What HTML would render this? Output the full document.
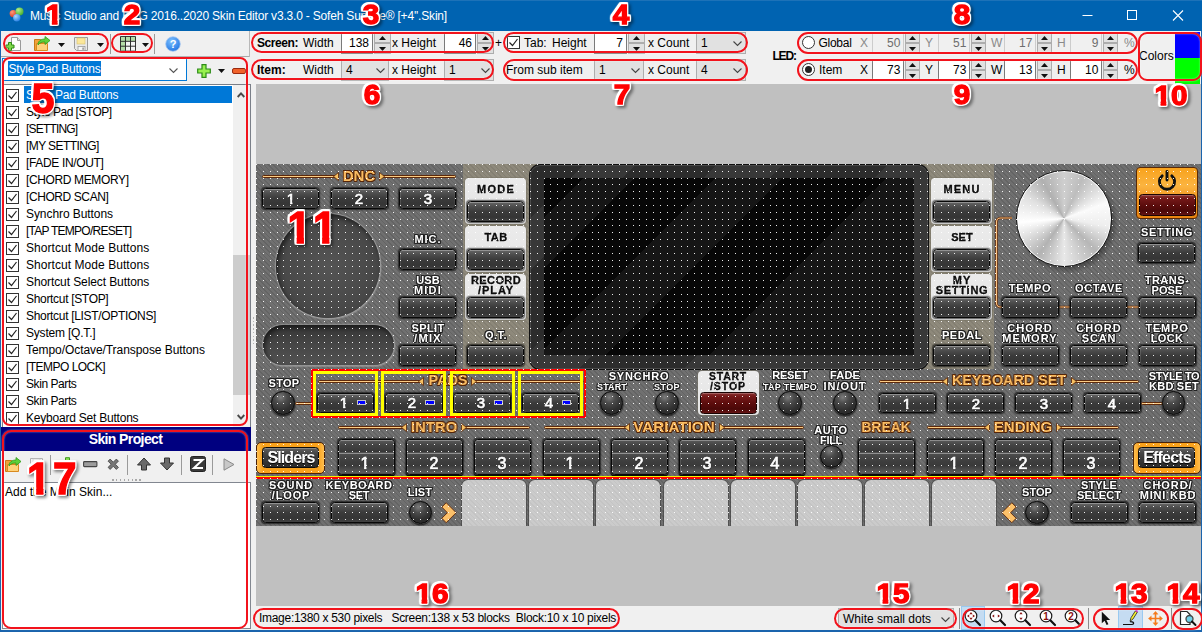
<!DOCTYPE html><html><head><meta charset="utf-8"><title>Skin Editor</title><style>
html,body{margin:0;padding:0;}
body{width:1202px;height:632px;position:relative;overflow:hidden;background:#f0f0f0;font-family:"Liberation Sans","DejaVu Sans",sans-serif;font-size:12px;color:#000;}
div{position:absolute;box-sizing:border-box;}
span.c1{box-sizing:border-box;}
svg{position:absolute;overflow:visible;}
.kl,.kd,.kn,.ko{will-change:transform;}
.t{white-space:nowrap;line-height:14px;height:14px;}
.b{font-weight:bold;}
.edit{background:#fff;border:1px solid #7a7a7a;}
.edit.dis{background:#f0f0f0;border-color:#ccc;color:#6d6d6d;}
.edit .v{right:3px;top:3px;line-height:14px;white-space:nowrap;}
.combo{background:#e1e1e1;border:1px solid #adadad;}
.combo .v{left:4px;top:3px;line-height:14px;white-space:nowrap;}
.sp{background:#e1e1e1;border:1px solid #adadad;}
.kb{border:1.300px solid #080808;border-radius:3.500px;background:linear-gradient(#727272 0,#5e5e5e 8%,#4c4c4c 25%,#3b3b3b 50%,#353535 80%,#424242 100%);box-shadow:0 0 1.500px .5px rgba(0,0,0,.65),inset 0 1px 0 rgba(255,255,255,.25),inset 1px 0 0 rgba(255,255,255,.12),inset -1px 0 0 rgba(255,255,255,.06);}
.kbt{border:1.300px solid #080808;border-radius:3.500px;background:linear-gradient(#6e6e6e 0,#555 4%,#444 15%,#383838 34%,#343434 36.5%,#9c9c9c 37.5%,#9c9c9c 39.5%,#4c4c4c 41%,#3e3e3e 62%,#3a3a3a 75%,#5a5a5a 96%,#444 100%);box-shadow:0 0 1.500px .5px rgba(0,0,0,.65),0 1.500px 0 rgba(0,0,0,.8),inset 0 1px 0 rgba(255,255,255,.25),inset 1px 0 0 rgba(255,255,255,.12),inset -1px 0 0 rgba(255,255,255,.06);}
.rb{border:1.800px solid #050505;border-radius:50%;background:radial-gradient(circle at 40% 24%,#7c7c7c 0%,#4c4c4c 28%,#303030 62%,#222 100%);box-shadow:0 1px 1.500px .5px rgba(0,0,0,.65);}
.kl{color:#fff;font-weight:bold;font-size:11px;line-height:10px;white-space:nowrap;text-align:center;transform:translateX(-50%);letter-spacing:0.2px;text-shadow:-1px 0 #222,1px 0 #222,0 -1px #222,0 1px #222,-1px -1px #222,1px 1px #222,1px -1px #222,-1px 1px #222;}
.kd{color:#0c0c0c;font-weight:bold;font-size:11px;line-height:10px;white-space:nowrap;text-align:center;transform:translateX(-50%);-webkit-text-stroke:.3px #0c0c0c;}
.kn{--s:.7px;color:#fff;font-weight:normal;-webkit-text-stroke:var(--s) #fff;font-size:15px;line-height:15px;white-space:nowrap;text-align:center;transform:translateX(-50%);text-shadow:0 1px 1px #000;}
.ko{color:#fbbd62;font-weight:bold;white-space:nowrap;text-align:center;transform-origin:50% 50%;text-shadow:-1px 0 #55260a,1px 0 #55260a,0 -1px #55260a,0 1px #55260a,-.7px -.7px #55260a,.7px .7px #55260a,.7px -.7px #55260a,-.7px .7px #55260a;}
.tile{background:linear-gradient(#ebebeb,#e4e4e4);border-radius:4px;box-shadow:0 0 0 1px rgba(120,115,100,.5);}
.ro{border:2.300px solid #f2131c;box-shadow:0 0 1.5px rgba(255,255,255,.8), inset 0 0 1.5px rgba(255,255,255,.8);}
.num{color:#f00;font-weight:bold;white-space:nowrap;transform:translateX(-50%) scaleX(1.06);--s:1.300px;-webkit-text-stroke:var(--s) #f00;filter:drop-shadow(1.400px 0 0 #fff) drop-shadow(-1.400px 0 0 #fff) drop-shadow(0 1.400px 0 #fff) drop-shadow(0 -1.400px 0 #fff) drop-shadow(2px 2px 1.500px rgba(0,0,0,.45));}
.c1{position:static;display:inline-block;line-height:1em;clip-path:polygon(-0.200em -0.300em,0.800em -0.300em,0.800em calc(0.7445em - var(--s)/2 - 2.500px),calc(0.3706em + var(--s)/2 + 0.100px) calc(0.7445em - var(--s)/2 - 2.500px),calc(0.3706em + var(--s)/2 + 0.100px) 1.200em,calc(0.2334em - var(--s)/2 - 0.100px) 1.200em,calc(0.2334em - var(--s)/2 - 0.100px) calc(0.7445em - var(--s)/2 - 2.500px),-0.200em calc(0.7445em - var(--s)/2 - 2.500px));}
.c1r{position:static;display:inline-block;line-height:1em;clip-path:polygon(-0.200em -0.300em,0.800em -0.300em,0.800em calc(0.7718em - var(--s)/2 - 2px),calc(0.3398em + var(--s)/2 + 0.100px) calc(0.7718em - var(--s)/2 - 2px),calc(0.3398em + var(--s)/2 + 0.100px) 1.200em,calc(0.2515em - var(--s)/2 - 0.100px) 1.200em,calc(0.2515em - var(--s)/2 - 0.100px) calc(0.7718em - var(--s)/2 - 2px),-0.200em calc(0.7718em - var(--s)/2 - 2px));}
.li{left:0;width:229px;height:17px;}
.li .cb{left:3px;top:3px;}
.li .lt{left:23px;top:2px;line-height:15px;white-space:nowrap;}
.cb{width:13px;height:13px;border:1px solid #333;background:#fff;}
</style></head><body>
<div style="left:0px;top:0px;width:1202px;height:31px;background:#0063b1;"></div>
<div style="left:0px;top:0px;width:1202px;height:1px;background:#1d72b8;"></div>
<div style="left:0px;top:31px;width:1px;height:601px;background:#1a64ad;"></div>
<div style="left:1201px;top:31px;width:1px;height:601px;background:#1a64ad;"></div>
<div style="left:0px;top:630px;width:1202px;height:2px;background:#1a64ad;"></div>
<svg style="left:9px;top:7px" width="16" height="16" viewBox="0 0 16 16"><defs><radialGradient id="gr" cx=".35" cy=".3" r=".8"><stop offset="0" stop-color="#ff9a7a"/><stop offset="1" stop-color="#d8301c"/></radialGradient><radialGradient id="gg" cx=".35" cy=".3" r=".8"><stop offset="0" stop-color="#b4f08a"/><stop offset="1" stop-color="#3aa82a"/></radialGradient><radialGradient id="gb" cx=".35" cy=".3" r=".8"><stop offset="0" stop-color="#a8d8ff"/><stop offset="1" stop-color="#1c78e0"/></radialGradient></defs><circle cx="4.2" cy="6.6" r="3.6" fill="url(#gr)"/><circle cx="10.5" cy="4.6" r="4" fill="url(#gg)"/><circle cx="7.8" cy="10.8" r="3.7" fill="url(#gb)"/></svg>
<div class="t ttl" style="left:30px;top:9px;letter-spacing:-0.190px;color:#fff;">Music Studio and KRG 2016..2020 Skin Editor v3.3.0 - Sofeh Sunrise® [+4''.Skin]</div>
<svg style="left:1070px;top:0" width="132" height="31" viewBox="0 0 132 31" fill="none" stroke="#fff" stroke-width="1"><path d="M12.5 15.5h10"/><rect x="57.5" y="10.5" width="9" height="9"/><path d="M103 10.5l10 10M113 10.5l-10 10" stroke-width="1.1"/></svg>
<div style="left:1px;top:31px;width:1200px;height:53px;background:#f0f0f0;"></div>
<div style="left:1px;top:56px;width:249px;height:1px;background:#a8a8a8;"></div>
<div style="left:249px;top:31px;width:1px;height:26px;background:#b8b8b8;"></div>
<div style="left:110px;top:34px;width:1px;height:20px;background:#9a9a9a;"></div>
<div style="left:154px;top:34px;width:1px;height:20px;background:#9a9a9a;"></div>
<svg style="left:5px;top:36px" width="17" height="16" viewBox="0 0 17 16"><path d="M6.5 1.5h6l3 3v10h-9z" fill="#fdfdfd" stroke="#9a9a9a"/><path d="M12.5 1.5v3h3" fill="#e4e4e4" stroke="#9a9a9a"/><path d="M3.5 6.5h3v2.5h2.5v3h-2.5v2.500h-3v-2.500h-2.500v-3h2.500z" fill="#7fd84a" stroke="#2c8a12"/></svg>
<svg style="left:33px;top:35px" width="18" height="17" viewBox="0 0 18 17"><path d="M1.5 4.500h6l1 1.500h5v9.500h-12z" fill="#f2a23a" stroke="#c87818"/><path d="M3.500 8.500h11v7h-11z" fill="#ffd27a" stroke="#d88a20"/><path d="M5 10c0-4 3-6 7-6v-2.500l5 4-5 4v-2.500c-3 0-5 .5-7 3z" fill="#5fd03a" stroke="#2c9a18" stroke-width=".8"/></svg>
<svg style="left:58px;top:43px" width="7" height="4" viewBox="0 0 7 4"><path d="M0 0h7L3.5 4z" fill="#111"/></svg>
<svg style="left:73px;top:36px" width="16" height="16" viewBox="0 0 16 16"><path d="M1.500 1.500h13v13h-11l-2-2z" fill="#e9e9e9" stroke="#9a9a9a"/><rect x="4" y="2" width="8" height="6" fill="#fbe79a" stroke="#d8c070" stroke-width=".6"/><rect x="5" y="10.500" width="7" height="4" fill="#f6f6f6" stroke="#9a9a9a" stroke-width=".8"/><rect x="9.300" y="11.500" width="1.600" height="2.300" fill="#9a9a9a"/></svg>
<svg style="left:97px;top:43px" width="7" height="4" viewBox="0 0 7 4"><path d="M0 0h7L3.5 4z" fill="#111"/></svg>
<svg style="left:120px;top:36.300px" width="16" height="15.500" viewBox="0 0 17 17" preserveAspectRatio="none"><rect x="0" y="0" width="17" height="17" rx="1" fill="#2a2a2a"/><rect x="1.00" y="1.00" width="4.300" height="4.300" fill="#b4dca8"/><rect x="6.35" y="1.00" width="4.300" height="4.300" fill="#b4dca8"/><rect x="11.70" y="1.00" width="4.300" height="4.300" fill="#b4dca8"/><rect x="1.00" y="6.35" width="4.300" height="4.300" fill="#b4dca8"/><rect x="6.35" y="6.35" width="4.300" height="4.300" fill="#f4f4f4"/><rect x="11.70" y="6.35" width="4.300" height="4.300" fill="#f4f4f4"/><rect x="1.00" y="11.70" width="4.300" height="4.300" fill="#b4dca8"/><rect x="6.35" y="11.70" width="4.300" height="4.300" fill="#f4f4f4"/><rect x="11.70" y="11.70" width="4.300" height="4.300" fill="#f4f4f4"/></svg>
<svg style="left:142px;top:43px" width="7" height="4" viewBox="0 0 7 4"><path d="M0 0h7L3.5 4z" fill="#111"/></svg>
<svg style="left:165px;top:36px" width="16" height="16" viewBox="0 0 16 16"><defs><radialGradient id="hq" cx=".4" cy=".3" r=".8"><stop offset="0" stop-color="#7cc0ff"/><stop offset="1" stop-color="#1a6fe0"/></radialGradient></defs><circle cx="8" cy="8" r="7.300" fill="url(#hq)" stroke="#a8c8f0" stroke-width=".8"/><text x="8" y="12" font-family="Liberation Sans,sans-serif" font-weight="bold" font-size="11" fill="#fff" text-anchor="middle">?</text></svg>
<div class="t b" style="left:257px;top:36px;letter-spacing:-0.432px;">Screen:</div>
<div class="t" style="left:303px;top:36px;">Width</div>
<div class="edit" style="left:341px;top:32px;width:32px;height:22px;"><div class="v">138</div></div>
<div class="sp" style="left:374px;top:32px;width:17px;height:11px;"></div>
<svg style="left:379.0px;top:35.5px" width="7" height="4" viewBox="0 0 7 4"><path d="M0 4L3.500 0L7 4z" fill="#111"/></svg>
<div class="sp" style="left:374px;top:43px;width:17px;height:11px;"></div>
<svg style="left:379.0px;top:46.5px" width="7" height="4" viewBox="0 0 7 4"><path d="M0 0h7L3.500 4z" fill="#111"/></svg>
<div class="t" style="left:392px;top:36px;">x Height</div>
<div class="edit" style="left:444px;top:32px;width:32px;height:22px;"><div class="v">46</div></div>
<div class="sp" style="left:477px;top:32px;width:17px;height:11px;"></div>
<svg style="left:482.0px;top:35.5px" width="7" height="4" viewBox="0 0 7 4"><path d="M0 4L3.500 0L7 4z" fill="#111"/></svg>
<div class="sp" style="left:477px;top:43px;width:17px;height:11px;"></div>
<svg style="left:482.0px;top:46.5px" width="7" height="4" viewBox="0 0 7 4"><path d="M0 0h7L3.500 4z" fill="#111"/></svg>
<div class="t" style="left:495px;top:36px;">+</div>
<div class="t b" style="left:257px;top:63px;">Item:</div>
<div class="t" style="left:303px;top:63px;">Width</div>
<div class="combo" style="left:341px;top:59px;width:48px;height:22px;"><div class="v">4</div></div>
<svg style="left:375.5px;top:68px" width="9" height="5" viewBox="0 0 9 5"><path d="M.5 .5l4 4 4-4" fill="none" stroke="#444" stroke-width="1.100"/></svg>
<div class="t" style="left:392px;top:63px;">x Height</div>
<div class="combo" style="left:444px;top:59px;width:50px;height:22px;"><div class="v">1</div></div>
<svg style="left:480.5px;top:68px" width="9" height="5" viewBox="0 0 9 5"><path d="M.5 .5l4 4 4-4" fill="none" stroke="#444" stroke-width="1.100"/></svg>
<div class="cb" style="left:507px;top:36px;width:13px;height:13px;"><svg style="left:0;top:0" width="11" height="11" viewBox="0 0 11 11"><path d="M1.500 5.500l3 3 5-6.500" fill="none" stroke="#222" stroke-width="1.200"/></svg></div>
<div class="t" style="left:524px;top:36px;">Tab:</div>
<div class="t" style="left:552px;top:36px;">Height</div>
<div class="edit" style="left:594px;top:32px;width:33px;height:22px;"><div class="v">7</div></div>
<div class="sp" style="left:628px;top:32px;width:17px;height:11px;"></div>
<svg style="left:633.0px;top:35.5px" width="7" height="4" viewBox="0 0 7 4"><path d="M0 4L3.500 0L7 4z" fill="#111"/></svg>
<div class="sp" style="left:628px;top:43px;width:17px;height:11px;"></div>
<svg style="left:633.0px;top:46.5px" width="7" height="4" viewBox="0 0 7 4"><path d="M0 0h7L3.500 4z" fill="#111"/></svg>
<div class="t" style="left:648px;top:36px;">x Count</div>
<div class="combo" style="left:696px;top:32px;width:50px;height:22px;"><div class="v">1</div></div>
<svg style="left:732.5px;top:41px" width="9" height="5" viewBox="0 0 9 5"><path d="M.5 .5l4 4 4-4" fill="none" stroke="#444" stroke-width="1.100"/></svg>
<div class="t" style="left:506px;top:63px;">From sub item</div>
<div class="combo" style="left:594px;top:59px;width:50px;height:22px;"><div class="v">1</div></div>
<svg style="left:630.5px;top:68px" width="9" height="5" viewBox="0 0 9 5"><path d="M.5 .5l4 4 4-4" fill="none" stroke="#444" stroke-width="1.100"/></svg>
<div class="t" style="left:648px;top:63px;">x Count</div>
<div class="combo" style="left:696px;top:59px;width:50px;height:22px;"><div class="v">4</div></div>
<svg style="left:732.5px;top:68px" width="9" height="5" viewBox="0 0 9 5"><path d="M.5 .5l4 4 4-4" fill="none" stroke="#444" stroke-width="1.100"/></svg>
<div class="t b" style="left:772.4px;top:49px;letter-spacing:-1.099px;">LED:</div>
<div style="left:802px;top:36px;width:13px;height:13px;border:1px solid #333;border-radius:50%;background:#fff;"></div>
<div class="t" style="left:818.4px;top:36px;letter-spacing:-0.248px;">Global</div>
<div style="left:802px;top:63px;width:13px;height:13px;border:1px solid #333;border-radius:50%;background:#fff;"><div style="left:2px;top:2px;width:7px;height:7px;border-radius:50%;background:#222;"></div></div>
<div class="t" style="left:819px;top:63px;">Item</div>
<div class="t" style="left:860px;top:36px;color:#8a8a8a;">X</div>
<div class="t" style="left:860px;top:63px;">X</div>
<div class="t" style="left:925px;top:36px;color:#8a8a8a;">Y</div>
<div class="t" style="left:925px;top:63px;">Y</div>
<div class="t" style="left:991px;top:36px;color:#8a8a8a;">W</div>
<div class="t" style="left:991px;top:63px;">W</div>
<div class="t" style="left:1057px;top:36px;color:#8a8a8a;">H</div>
<div class="t" style="left:1057px;top:63px;">H</div>
<div class="edit dis" style="left:872.4px;top:32px;width:32px;height:22px;"><div class="v">50</div></div>
<div class="sp" style="left:905.4px;top:32px;width:14.5px;height:11px;"></div>
<svg style="left:909.15px;top:35.5px" width="7" height="4" viewBox="0 0 7 4"><path d="M0 4L3.500 0L7 4z" fill="#111"/></svg>
<div class="sp" style="left:905.4px;top:43px;width:14.5px;height:11px;"></div>
<svg style="left:909.15px;top:46.5px" width="7" height="4" viewBox="0 0 7 4"><path d="M0 0h7L3.500 4z" fill="#111"/></svg>
<div class="edit" style="left:872.4px;top:59px;width:32px;height:22px;"><div class="v">73</div></div>
<div class="sp" style="left:905.4px;top:59px;width:14.5px;height:11px;"></div>
<svg style="left:909.15px;top:62.5px" width="7" height="4" viewBox="0 0 7 4"><path d="M0 4L3.500 0L7 4z" fill="#111"/></svg>
<div class="sp" style="left:905.4px;top:70px;width:14.5px;height:11px;"></div>
<svg style="left:909.15px;top:73.5px" width="7" height="4" viewBox="0 0 7 4"><path d="M0 0h7L3.500 4z" fill="#111"/></svg>
<div class="edit dis" style="left:938.4px;top:32px;width:32px;height:22px;"><div class="v">51</div></div>
<div class="sp" style="left:971.4px;top:32px;width:14.5px;height:11px;"></div>
<svg style="left:975.15px;top:35.5px" width="7" height="4" viewBox="0 0 7 4"><path d="M0 4L3.500 0L7 4z" fill="#111"/></svg>
<div class="sp" style="left:971.4px;top:43px;width:14.5px;height:11px;"></div>
<svg style="left:975.15px;top:46.5px" width="7" height="4" viewBox="0 0 7 4"><path d="M0 0h7L3.500 4z" fill="#111"/></svg>
<div class="edit" style="left:938.4px;top:59px;width:32px;height:22px;"><div class="v">73</div></div>
<div class="sp" style="left:971.4px;top:59px;width:14.5px;height:11px;"></div>
<svg style="left:975.15px;top:62.5px" width="7" height="4" viewBox="0 0 7 4"><path d="M0 4L3.500 0L7 4z" fill="#111"/></svg>
<div class="sp" style="left:971.4px;top:70px;width:14.5px;height:11px;"></div>
<svg style="left:975.15px;top:73.5px" width="7" height="4" viewBox="0 0 7 4"><path d="M0 0h7L3.500 4z" fill="#111"/></svg>
<div class="edit dis" style="left:1004.4px;top:32px;width:32px;height:22px;"><div class="v">17</div></div>
<div class="sp" style="left:1037.4px;top:32px;width:14.5px;height:11px;"></div>
<svg style="left:1041.15px;top:35.5px" width="7" height="4" viewBox="0 0 7 4"><path d="M0 4L3.500 0L7 4z" fill="#111"/></svg>
<div class="sp" style="left:1037.4px;top:43px;width:14.5px;height:11px;"></div>
<svg style="left:1041.15px;top:46.5px" width="7" height="4" viewBox="0 0 7 4"><path d="M0 0h7L3.500 4z" fill="#111"/></svg>
<div class="edit" style="left:1004.4px;top:59px;width:32px;height:22px;"><div class="v">13</div></div>
<div class="sp" style="left:1037.4px;top:59px;width:14.5px;height:11px;"></div>
<svg style="left:1041.15px;top:62.5px" width="7" height="4" viewBox="0 0 7 4"><path d="M0 4L3.500 0L7 4z" fill="#111"/></svg>
<div class="sp" style="left:1037.4px;top:70px;width:14.5px;height:11px;"></div>
<svg style="left:1041.15px;top:73.5px" width="7" height="4" viewBox="0 0 7 4"><path d="M0 0h7L3.500 4z" fill="#111"/></svg>
<div class="edit dis" style="left:1070.4px;top:32px;width:32px;height:22px;"><div class="v">9</div></div>
<div class="sp" style="left:1103.4px;top:32px;width:14.5px;height:11px;"></div>
<svg style="left:1107.15px;top:35.5px" width="7" height="4" viewBox="0 0 7 4"><path d="M0 4L3.500 0L7 4z" fill="#111"/></svg>
<div class="sp" style="left:1103.4px;top:43px;width:14.5px;height:11px;"></div>
<svg style="left:1107.15px;top:46.5px" width="7" height="4" viewBox="0 0 7 4"><path d="M0 0h7L3.500 4z" fill="#111"/></svg>
<div class="edit" style="left:1070.4px;top:59px;width:32px;height:22px;"><div class="v">10</div></div>
<div class="sp" style="left:1103.4px;top:59px;width:14.5px;height:11px;"></div>
<svg style="left:1107.15px;top:62.5px" width="7" height="4" viewBox="0 0 7 4"><path d="M0 4L3.500 0L7 4z" fill="#111"/></svg>
<div class="sp" style="left:1103.4px;top:70px;width:14.5px;height:11px;"></div>
<svg style="left:1107.15px;top:73.5px" width="7" height="4" viewBox="0 0 7 4"><path d="M0 0h7L3.500 4z" fill="#111"/></svg>
<div class="t" style="left:1124px;top:36px;color:#8a8a8a;">%</div>
<div class="t" style="left:1124px;top:63px;">%</div>
<div class="t" style="left:1139px;top:49px;">Colors</div>
<div style="left:1175px;top:32px;width:25px;height:26px;background:#0000ff;"></div>
<div style="left:1175px;top:58px;width:25px;height:26px;background:#00ff00;"></div>
<div style="left:2px;top:58px;width:185px;height:23px;background:#fff;border:1px solid #0078d7;"></div>
<div style="left:8px;top:61px;width:93px;height:14.6px;background:#0078d7;"></div>
<div class="t" style="left:8.5px;top:61.5px;letter-spacing:-0.200px;color:#fff;line-height:15px;height:15px;">Style Pad Buttons</div>
<svg style="left:169px;top:68px" width="9" height="5" viewBox="0 0 9 5"><path d="M.5 .5l4 4 4-4" fill="none" stroke="#555" stroke-width="1.100"/></svg>
<svg style="left:197px;top:64px" width="14" height="14" viewBox="0 0 14 14"><path d="M5 .7h4v4.300h4.300v4h-4.300v4.300h-4v-4.300h-4.300v-4h4.300z" fill="#98f050" stroke="#2c8a18" stroke-width="1.200"/></svg>
<svg style="left:218px;top:69px" width="7" height="4" viewBox="0 0 7 4"><path d="M0 0h7L3.5 4z" fill="#111"/></svg>
<svg style="left:232px;top:68px" width="14" height="7" viewBox="0 0 14 7"><rect x=".5" y=".5" width="13" height="5" rx="1.500" fill="#f0622a" stroke="#9a2a10"/></svg>
<div style="left:2px;top:84px;width:249px;height:345px;background:#fff;border:1px solid #7a7f88;"></div>
<div class="li" style="left:3px;top:86px;"><div class="cb"><svg style="left:0;top:0" width="11" height="11" viewBox="0 0 11 11"><path d="M1.500 5.500l3 3 5-6.500" fill="none" stroke="#222" stroke-width="1.200"/></svg></div><div style="left:21px;top:0;width:208px;height:17px;background:#0078d7;"></div><div class="lt" style="color:#fff;letter-spacing:-0.188px;">Style Pad Buttons</div></div>
<div class="li" style="left:3px;top:103px;"><div class="cb"><svg style="left:0;top:0" width="11" height="11" viewBox="0 0 11 11"><path d="M1.500 5.500l3 3 5-6.500" fill="none" stroke="#222" stroke-width="1.200"/></svg></div><div class="lt" style="letter-spacing:-0.508px;">Style Pad [STOP]</div></div>
<div class="li" style="left:3px;top:120px;"><div class="cb"><svg style="left:0;top:0" width="11" height="11" viewBox="0 0 11 11"><path d="M1.500 5.500l3 3 5-6.500" fill="none" stroke="#222" stroke-width="1.200"/></svg></div><div class="lt" style="letter-spacing:-0.808px;">[SETTING]</div></div>
<div class="li" style="left:3px;top:137px;"><div class="cb"><svg style="left:0;top:0" width="11" height="11" viewBox="0 0 11 11"><path d="M1.500 5.500l3 3 5-6.500" fill="none" stroke="#222" stroke-width="1.200"/></svg></div><div class="lt" style="letter-spacing:-0.591px;">[MY SETTING]</div></div>
<div class="li" style="left:3px;top:154px;"><div class="cb"><svg style="left:0;top:0" width="11" height="11" viewBox="0 0 11 11"><path d="M1.500 5.500l3 3 5-6.500" fill="none" stroke="#222" stroke-width="1.200"/></svg></div><div class="lt" style="letter-spacing:-0.339px;">[FADE IN/OUT]</div></div>
<div class="li" style="left:3px;top:171px;"><div class="cb"><svg style="left:0;top:0" width="11" height="11" viewBox="0 0 11 11"><path d="M1.500 5.500l3 3 5-6.500" fill="none" stroke="#222" stroke-width="1.200"/></svg></div><div class="lt" style="letter-spacing:-0.370px;">[CHORD MEMORY]</div></div>
<div class="li" style="left:3px;top:188px;"><div class="cb"><svg style="left:0;top:0" width="11" height="11" viewBox="0 0 11 11"><path d="M1.500 5.500l3 3 5-6.500" fill="none" stroke="#222" stroke-width="1.200"/></svg></div><div class="lt" style="letter-spacing:-0.412px;">[CHORD SCAN]</div></div>
<div class="li" style="left:3px;top:205px;"><div class="cb"><svg style="left:0;top:0" width="11" height="11" viewBox="0 0 11 11"><path d="M1.500 5.500l3 3 5-6.500" fill="none" stroke="#222" stroke-width="1.200"/></svg></div><div class="lt" style="letter-spacing:-0.070px;">Synchro Buttons</div></div>
<div class="li" style="left:3px;top:222px;"><div class="cb"><svg style="left:0;top:0" width="11" height="11" viewBox="0 0 11 11"><path d="M1.500 5.500l3 3 5-6.500" fill="none" stroke="#222" stroke-width="1.200"/></svg></div><div class="lt" style="letter-spacing:-0.743px;">[TAP TEMPO/RESET]</div></div>
<div class="li" style="left:3px;top:239px;"><div class="cb"><svg style="left:0;top:0" width="11" height="11" viewBox="0 0 11 11"><path d="M1.500 5.500l3 3 5-6.500" fill="none" stroke="#222" stroke-width="1.200"/></svg></div><div class="lt" style="letter-spacing:0.054px;">Shortcut Mode Buttons</div></div>
<div class="li" style="left:3px;top:256px;"><div class="cb"><svg style="left:0;top:0" width="11" height="11" viewBox="0 0 11 11"><path d="M1.500 5.500l3 3 5-6.500" fill="none" stroke="#222" stroke-width="1.200"/></svg></div><div class="lt" style="letter-spacing:0.054px;">Shortcut Mode Buttons</div></div>
<div class="li" style="left:3px;top:273px;"><div class="cb"><svg style="left:0;top:0" width="11" height="11" viewBox="0 0 11 11"><path d="M1.500 5.500l3 3 5-6.500" fill="none" stroke="#222" stroke-width="1.200"/></svg></div><div class="lt" style="letter-spacing:-0.096px;">Shortcut Select Buttons</div></div>
<div class="li" style="left:3px;top:290px;"><div class="cb"><svg style="left:0;top:0" width="11" height="11" viewBox="0 0 11 11"><path d="M1.500 5.500l3 3 5-6.500" fill="none" stroke="#222" stroke-width="1.200"/></svg></div><div class="lt" style="letter-spacing:-0.317px;">Shortcut [STOP]</div></div>
<div class="li" style="left:3px;top:307px;"><div class="cb"><svg style="left:0;top:0" width="11" height="11" viewBox="0 0 11 11"><path d="M1.500 5.500l3 3 5-6.500" fill="none" stroke="#222" stroke-width="1.200"/></svg></div><div class="lt" style="letter-spacing:-0.316px;">Shortcut [LIST/OPTIONS]</div></div>
<div class="li" style="left:3px;top:324px;"><div class="cb"><svg style="left:0;top:0" width="11" height="11" viewBox="0 0 11 11"><path d="M1.500 5.500l3 3 5-6.500" fill="none" stroke="#222" stroke-width="1.200"/></svg></div><div class="lt" style="letter-spacing:-0.201px;">System [Q.T.]</div></div>
<div class="li" style="left:3px;top:341px;"><div class="cb"><svg style="left:0;top:0" width="11" height="11" viewBox="0 0 11 11"><path d="M1.500 5.500l3 3 5-6.500" fill="none" stroke="#222" stroke-width="1.200"/></svg></div><div class="lt" style="letter-spacing:-0.069px;">Tempo/Octave/Transpose Buttons</div></div>
<div class="li" style="left:3px;top:358px;"><div class="cb"><svg style="left:0;top:0" width="11" height="11" viewBox="0 0 11 11"><path d="M1.500 5.500l3 3 5-6.500" fill="none" stroke="#222" stroke-width="1.200"/></svg></div><div class="lt" style="letter-spacing:-0.529px;">[TEMPO LOCK]</div></div>
<div class="li" style="left:3px;top:375px;"><div class="cb"><svg style="left:0;top:0" width="11" height="11" viewBox="0 0 11 11"><path d="M1.500 5.500l3 3 5-6.500" fill="none" stroke="#222" stroke-width="1.200"/></svg></div><div class="lt" style="letter-spacing:-0.429px;">Skin Parts</div></div>
<div class="li" style="left:3px;top:392px;"><div class="cb"><svg style="left:0;top:0" width="11" height="11" viewBox="0 0 11 11"><path d="M1.500 5.500l3 3 5-6.500" fill="none" stroke="#222" stroke-width="1.200"/></svg></div><div class="lt" style="letter-spacing:-0.429px;">Skin Parts</div></div>
<div class="li" style="left:3px;top:409px;"><div class="cb"><svg style="left:0;top:0" width="11" height="11" viewBox="0 0 11 11"><path d="M1.500 5.500l3 3 5-6.500" fill="none" stroke="#222" stroke-width="1.200"/></svg></div><div class="lt" style="letter-spacing:-0.217px;">Keyboard Set Buttons</div></div>
<div style="left:233px;top:85px;width:17px;height:342px;background:#f0f0f0;"></div>
<div style="left:233px;top:255px;width:17px;height:140px;background:#cdcdcd;"></div>
<svg style="left:236.500px;top:91.500px" width="8" height="6" viewBox="0 0 8 6"><path d="M.7 5l3.300-3.600 3.300 3.600" fill="none" stroke="#4a4a4a" stroke-width="1.900"/></svg>
<svg style="left:236.500px;top:413.500px" width="8" height="6" viewBox="0 0 8 6"><path d="M.7 1l3.300 3.600 3.300-3.600" fill="none" stroke="#4a4a4a" stroke-width="1.900"/></svg>
<div style="left:1px;top:427px;width:250px;height:24px;background:#000080;"></div>
<div class="t" style="left:88.7px;top:431px;letter-spacing:-0.610px;color:#fff;font-weight:bold;font-size:14px;line-height:16px;height:16px;">Skin Project</div>
<div style="left:1px;top:451px;width:250px;height:31px;background:#f0f0f0;"></div>
<svg style="left:4px;top:456px" width="18" height="17" viewBox="0 0 18 17"><path d="M1.500 4.500h6l1 1.500h5v9.500h-12z" fill="#f2a23a" stroke="#c87818"/><path d="M3.500 8.500h11v7h-11z" fill="#ffd27a" stroke="#d88a20"/><path d="M5 10c0-4 3-6 7-6v-2.500l5 4-5 4v-2.500c-3 0-5 .5-7 3z" fill="#5fd03a" stroke="#2c9a18" stroke-width=".8"/></svg>
<svg style="left:29px;top:457px" width="15" height="15" viewBox="0 0 15 15"><path d="M1.500 1.500h12v12h-10l-2-2z" fill="#f4f4f4" stroke="#b0b0b0"/><rect x="4" y="2" width="7" height="5" fill="#fafafa" stroke="#c8c8c8" stroke-width=".6"/></svg>
<div style="left:50px;top:455px;width:1px;height:20px;background:#9a9a9a;"></div>
<div style="left:127px;top:455px;width:1px;height:20px;background:#9a9a9a;"></div>
<div style="left:181px;top:455px;width:1px;height:20px;background:#9a9a9a;"></div>
<div style="left:212px;top:455px;width:1px;height:20px;background:#9a9a9a;"></div>
<svg style="left:61px;top:457px" width="13" height="14" viewBox="0 0 13 14"><path d="M4.500 .7h4v4.300h4v4h-4v4.300h-4v-4.300h-4v-4h4z" fill="#8fe05a" stroke="#3a9a1a"/></svg>
<svg style="left:83px;top:461px" width="15" height="7" viewBox="0 0 15 7"><rect x=".6" y=".6" width="13.300" height="5" rx=".8" fill="#9c9c9c" stroke="#444" stroke-width="1.100"/></svg>
<svg style="left:106px;top:457px" width="14.500" height="14.500" viewBox="0 0 14 14"><path d="M2 4l2-2 3 3 3-3 2 2-3 3 3 3-2 2-3-3-3 3-2-2 3-3z" fill="#777" stroke="#444" stroke-width=".8"/></svg>
<svg style="left:136px;top:457px" width="16" height="14" viewBox="0 0 16 14"><path d="M8 1l6.500 7h-4v5h-5v-5h-4z" fill="#6a6a6a" stroke="#333" stroke-width="1"/></svg>
<svg style="left:159px;top:457px" width="16" height="14" viewBox="0 0 16 14"><path d="M8 13l6.500-7h-4v-5h-5v5h-4z" fill="#6a6a6a" stroke="#333" stroke-width="1"/></svg>
<svg style="left:190px;top:456px" width="16" height="16" viewBox="0 0 16 16"><rect x=".5" y=".5" width="15" height="15" rx="2" fill="#3a3a3a" stroke="#222"/><path d="M3.500 4h9l-8.500 8h9" fill="none" stroke="#fff" stroke-width="2"/></svg>
<svg style="left:223px;top:458px" width="12" height="13" viewBox="0 0 12 13"><path d="M1 .8l10 5.700-10 5.700z" fill="#c8c8c8" stroke="#8a8a8a"/></svg>
<div style="left:112.0px;top:479.3px;width:1.6px;height:1.6px;background:#a8a8a8;"></div>
<div style="left:115.9px;top:479.3px;width:1.6px;height:1.6px;background:#a8a8a8;"></div>
<div style="left:119.8px;top:479.3px;width:1.6px;height:1.6px;background:#a8a8a8;"></div>
<div style="left:123.7px;top:479.3px;width:1.6px;height:1.6px;background:#a8a8a8;"></div>
<div style="left:127.6px;top:479.3px;width:1.6px;height:1.6px;background:#a8a8a8;"></div>
<div style="left:131.5px;top:479.3px;width:1.6px;height:1.6px;background:#a8a8a8;"></div>
<div style="left:135.4px;top:479.3px;width:1.6px;height:1.6px;background:#a8a8a8;"></div>
<div style="left:139.3px;top:479.3px;width:1.6px;height:1.6px;background:#a8a8a8;"></div>
<div style="left:2px;top:482px;width:249px;height:147px;background:#fff;border:1px solid #828790;"></div>
<div class="t" style="left:5px;top:485px;">Add the Main Skin...</div>
<div style="left:256px;top:84px;width:945px;height:522px;background:#c0c0c0;"></div>
<div style="left:252.5px;top:317.0px;width:1.5px;height:1.5px;background:#b4b4b4;"></div>
<div style="left:252.5px;top:320.7px;width:1.5px;height:1.5px;background:#b4b4b4;"></div>
<div style="left:252.5px;top:324.4px;width:1.5px;height:1.5px;background:#b4b4b4;"></div>
<div style="left:252.5px;top:328.1px;width:1.5px;height:1.5px;background:#b4b4b4;"></div>
<div style="left:252.5px;top:331.8px;width:1.5px;height:1.5px;background:#b4b4b4;"></div>
<div style="left:252.5px;top:335.5px;width:1.5px;height:1.5px;background:#b4b4b4;"></div>
<div style="left:252.5px;top:339.2px;width:1.5px;height:1.5px;background:#b4b4b4;"></div>
<div style="left:252.5px;top:342.9px;width:1.5px;height:1.5px;background:#b4b4b4;"></div>
<div style="left:251px;top:606px;width:950px;height:24px;background:#f0f0f0;"></div>
<div class="t" style="left:259px;top:611px;letter-spacing:-0.294px;">Image:1380 x 530 pixels&nbsp;&nbsp; Screen:138 x 53 blocks&nbsp; Block:10 x 10 pixels</div>
<div class="combo" style="left:838px;top:608px;width:116px;height:20px;"><div class="v">White small dots</div></div>
<svg style="left:940.5px;top:617px" width="9" height="5" viewBox="0 0 9 5"><path d="M.5 .5l4 4 4-4" fill="none" stroke="#444" stroke-width="1.100"/></svg>
<div style="left:960.5px;top:606px;width:24px;height:23.5px;background:#c5dcf2;border:1px solid #99c9f0;"></div>
<div style="left:1118.2px;top:606px;width:24.6px;height:23.5px;background:#c5dcf2;border:1px solid #99c9f0;"></div>
<div style="left:958.5px;top:608px;width:1px;height:20.5px;background:#8c8c8c;"></div>
<div style="left:1087.5px;top:608px;width:1px;height:20.5px;background:#8c8c8c;"></div>
<div style="left:1170.5px;top:608px;width:1px;height:20.5px;background:#8c8c8c;"></div>
<svg style="left:962.7px;top:608.3px" width="20" height="20" viewBox="-8 -8 20 20"><circle cx="0" cy="0" r="5.800" fill="#fff" stroke="#1a1a1a" stroke-width="1.200"/><path d="M4.300 4.300L9 9" stroke="#111" stroke-width="2.200" stroke-linecap="round"/><path d="M-4 0l2.200-1.600v3.200z" fill="#8a1010"/><path d="M4 0l-2.200-1.600v3.200z" fill="#8a1010"/><path d="M0-4l-1.600 2.200h3.200z" fill="#8a1010"/><path d="M0 4l-1.600-2.200h3.200z" fill="#8a1010"/></svg>
<svg style="left:987.8px;top:608.3px" width="20" height="20" viewBox="-8 -8 20 20"><circle cx="0" cy="0" r="5.800" fill="#fff" stroke="#1a1a1a" stroke-width="1.200"/><path d="M4.300 4.300L9 9" stroke="#111" stroke-width="2.200" stroke-linecap="round"/><path d="M-4 0l2.200-1.600v3.200z" fill="#8a1010"/><path d="M4 0l-2.200-1.600v3.200z" fill="#8a1010"/></svg>
<svg style="left:1012.8px;top:608.3px" width="20" height="20" viewBox="-8 -8 20 20"><circle cx="0" cy="0" r="5.800" fill="#fff" stroke="#1a1a1a" stroke-width="1.200"/><path d="M4.300 4.300L9 9" stroke="#111" stroke-width="2.200" stroke-linecap="round"/><path d="M0-4l-1.600 2.200h3.200z" fill="#8a1010"/><path d="M0 4l-1.600-2.200h3.200z" fill="#8a1010"/></svg>
<svg style="left:1037.6px;top:608.3px" width="20" height="20" viewBox="-8 -8 20 20"><circle cx="0" cy="0" r="5.800" fill="#fff" stroke="#1a1a1a" stroke-width="1.200"/><path d="M4.300 4.300L9 9" stroke="#111" stroke-width="2.200" stroke-linecap="round"/><text x="0" y="3.600" font-family="Liberation Sans,sans-serif" font-weight="bold" font-size="10" fill="#8a1010" text-anchor="middle">1</text></svg>
<svg style="left:1062.5px;top:608.3px" width="20" height="20" viewBox="-8 -8 20 20"><circle cx="0" cy="0" r="5.800" fill="#fff" stroke="#1a1a1a" stroke-width="1.200"/><path d="M4.300 4.300L9 9" stroke="#111" stroke-width="2.200" stroke-linecap="round"/><text x="0" y="3.600" font-family="Liberation Sans,sans-serif" font-weight="bold" font-size="10" fill="#8a1010" text-anchor="middle">2</text></svg>
<svg style="left:1101px;top:611px" width="11" height="15" viewBox="0 0 11 15"><path d="M.8 .8v11.500l2.800-2.600 2 4.300 1.800-.8-2-4.200h3.800z" fill="#111"/></svg>
<svg style="left:1122px;top:609px" width="17" height="18" viewBox="0 0 17 18"><path d="M1 15.500h8.500c2.500 0 3-2.200 .5-2.600l-2-.2" fill="none" stroke="#111" stroke-width="1.200"/><path d="M8 12.300l1-3.600 4.300-6.700 2 1.200-4.300 6.800z" fill="#f8f030" stroke="#222" stroke-width=".8"/><path d="M13.300 2l.8-1.200 2 1.200-.8 1.200z" fill="#e020d0"/></svg>
<svg style="left:1148px;top:611px" width="15" height="15" viewBox="-7.500 -7.500 15 15" fill="#f57a1a" stroke="#f57a1a"><path d="M-4.500 0h9M0-4.500v9" stroke-width="1.600" fill="none"/><path d="M0-7.200l2.600 3h-5.200z M0 7.200l2.600-3h-5.200z M-7.200 0l3-2.600v5.200z M7.200 0l-3-2.600v5.200z" stroke-width=".3"/></svg>
<svg style="left:1179px;top:610px" width="19" height="17" viewBox="0 0 19 17"><path d="M1.500 1.500h6.500l3 3v10h-9.500z" fill="#fff" stroke="#222" stroke-width="1.200"/><circle cx="10.500" cy="9" r="3.500" fill="#6fd0e8" stroke="#444" stroke-width="1.300"/><path d="M13 11.500l3.500 3.500" stroke="#111" stroke-width="2" stroke-linecap="round"/></svg>
<div style="left:256.4px;top:164px;width:944.6px;height:361.6px;background:repeating-linear-gradient(45deg,rgba(0,0,0,.11) 0,rgba(0,0,0,.11) 1.2px,rgba(0,0,0,0) 1.2px,rgba(0,0,0,0) 3.38px),#707070;"></div>
<div style="left:463px;top:164px;width:531px;height:204.8px;background:repeating-linear-gradient(45deg,rgba(0,0,0,.07) 0,rgba(0,0,0,.07) 1.2px,rgba(0,0,0,0) 1.2px,rgba(0,0,0,0) 3.38px),#8e897b;"></div>
<div style="left:529.5px;top:164.5px;width:398.5px;height:204px;background:linear-gradient(135deg,rgba(255,255,255,0) 0,rgba(255,255,255,0) 37.8px,rgba(255,255,255,.06) 37.8px,rgba(255,255,255,.06) 74.6px,rgba(255,255,255,0) 74.6px,rgba(255,255,255,0) 131.9px,rgba(255,255,255,.06) 131.9px,rgba(255,255,255,.06) 178.5px,rgba(255,255,255,0) 178.5px,rgba(255,255,255,0) 252.8px,rgba(255,255,255,.06) 252.8px),#2c2c2c;border-radius:10px;box-shadow:0 0 0 1px #111, inset 0 0 0 1px #4a4a4a;"></div>
<div style="left:544px;top:178px;width:370px;height:177px;background:linear-gradient(135deg,rgba(255,255,255,0) 0,rgba(255,255,255,0) 27.6px,rgba(255,255,255,.06) 27.6px,rgba(255,255,255,.06) 64.3px,rgba(255,255,255,0) 64.3px,rgba(255,255,255,0) 121.6px,rgba(255,255,255,.06) 121.6px,rgba(255,255,255,.06) 168.3px,rgba(255,255,255,0) 168.3px,rgba(255,255,255,0) 242.5px,rgba(255,255,255,.06) 242.5px),#070707;"></div>
<div style="left:262.4px;top:174.8px;width:74.30000000000001px;height:3px;background:#fbcc84;border:0.8px solid #5e2a0c;border-radius:1.500px;"></div>
<svg style="left:332.7px;top:171.8px" width="6" height="9" viewBox="0 0 6 9"><path d="M5.500 .5v8l-5-4z" fill="#f7c163" stroke="#5a2408" stroke-width=".8"/></svg>
<div style="left:381.3px;top:174.8px;width:74.30000000000001px;height:3px;background:#fbcc84;border:0.8px solid #5e2a0c;border-radius:1.500px;"></div>
<svg style="left:379.3px;top:171.8px" width="6" height="9" viewBox="0 0 6 9"><path d="M.5 .5v8l5-4z" fill="#f7c163" stroke="#5a2408" stroke-width=".8"/></svg>
<div class="ko" style="left:359.0px;top:167.70000000000002px;font-size:15px;line-height:15px;transform:translateX(-50%) scaleX(1.003);">DNC</div>
<div class="kb" style="left:262.4px;top:188px;width:57px;height:20.6px;"></div>
<div class="kn" style="left:290.9px;top:193.5px;font-size:15px;top:191px;"><span class="c1r">1</span></div>
<div class="kb" style="left:330.7px;top:188px;width:57px;height:20.6px;"></div>
<div class="kn" style="left:359.22999999999996px;top:193.5px;font-size:15px;top:191px;">2</div>
<div class="kb" style="left:399.1px;top:188px;width:57px;height:20.6px;"></div>
<div class="kn" style="left:427.55999999999995px;top:193.5px;font-size:15px;top:191px;">3</div>
<div style="left:276px;top:213.5px;width:104px;height:104px;border-radius:50%;background:radial-gradient(circle at 50% 50%,#545454 0%,#4a4a4a 55%,#3e3e3e 100%);box-shadow:0 0 0 1.300px rgba(165,165,165,.6),1px 1.500px 1px .5px rgba(200,200,200,.3),inset 2px 3px 5px rgba(0,0,0,.55);"></div>
<div style="left:263px;top:325px;width:131px;height:40px;border-radius:20px;background:linear-gradient(#363636,#484848 55%,#525252);box-shadow:0 0 0 1.300px rgba(160,160,160,.55),1px 1.500px 1px .5px rgba(200,200,200,.3),inset 2px 3px 5px rgba(0,0,0,.55);"></div>
<div class="kb" style="left:399.2px;top:249.4px;width:57.2px;height:20.6px;"></div>
<div class="kl" style="left:428px;top:234.0px;font-size:11px;letter-spacing:0.945px;">MIC.</div>
<div class="kb" style="left:399.2px;top:297.4px;width:57.2px;height:20.6px;"></div>
<div class="kl" style="left:428px;top:274.9px;font-size:11px;letter-spacing:0.058px;">USB</div>
<div class="kl" style="left:428px;top:285.0px;font-size:11px;letter-spacing:1.195px;">MIDI</div>
<div class="kb" style="left:399.2px;top:345.4px;width:57.2px;height:20.6px;"></div>
<div class="kl" style="left:428px;top:322.9px;font-size:11px;letter-spacing:0.366px;">SPLIT</div>
<div class="kl" style="left:428px;top:333.0px;font-size:11px;letter-spacing:1.347px;">/MIX</div>
<div class="tile" style="left:465.3px;top:178px;width:61.2px;height:46px;"></div>
<div class="kb" style="left:467.3px;top:201.4px;width:57px;height:20.6px;"></div>
<div class="kd" style="left:496px;top:183.5px;font-size:11px;letter-spacing:1.250px;">MODE</div>
<div class="tile" style="left:465.3px;top:226px;width:61.2px;height:46px;"></div>
<div class="kb" style="left:467.3px;top:249.4px;width:57px;height:20.6px;"></div>
<div class="kd" style="left:496px;top:231.5px;font-size:11px;letter-spacing:0.403px;">TAB</div>
<div class="tile" style="left:465.3px;top:274px;width:61.2px;height:46px;"></div>
<div class="kb" style="left:467.3px;top:297.4px;width:57px;height:20.6px;"></div>
<div class="kd" style="left:496px;top:275.2px;font-size:11px;letter-spacing:0.388px;">RECORD</div>
<div class="kd" style="left:496px;top:285.3px;font-size:11px;letter-spacing:0.923px;">/PLAY</div>
<div class="kb" style="left:467.3px;top:345.4px;width:57px;height:20.6px;"></div>
<div class="kl" style="left:496px;top:330px;font-size:11px;letter-spacing:0.458px;">Q.T.</div>
<div class="tile" style="left:931px;top:178px;width:61px;height:46px;"></div>
<div class="kb" style="left:932.8px;top:201.4px;width:57px;height:20.6px;"></div>
<div class="kd" style="left:961.5px;top:183.7px;font-size:11px;letter-spacing:1.153px;">MENU</div>
<div class="tile" style="left:931px;top:226px;width:61px;height:46px;"></div>
<div class="kb" style="left:932.8px;top:249.4px;width:57px;height:20.6px;"></div>
<div class="kd" style="left:961.5px;top:231.7px;font-size:11px;letter-spacing:0.035px;">SET</div>
<div class="tile" style="left:931px;top:274px;width:61px;height:46px;"></div>
<div class="kb" style="left:932.8px;top:297.4px;width:57px;height:20.6px;"></div>
<div class="kd" style="left:961.5px;top:275.2px;font-size:11px;letter-spacing:1.100px;">MY</div>
<div class="kd" style="left:961.5px;top:285.2px;font-size:11px;letter-spacing:0.704px;">SETTING</div>
<div class="kb" style="left:932.8px;top:345.4px;width:57px;height:20.6px;"></div>
<div class="kl" style="left:961.5px;top:330px;font-size:11px;letter-spacing:0.544px;">PEDAL</div>
<div style="left:1015px;top:170px;width:104px;height:104px;border-radius:50%;background:radial-gradient(circle at 50% 50%,rgba(0,0,0,.6) 0%,rgba(0,0,0,.5) 55%,rgba(0,0,0,0) 70%);"></div>
<div style="left:1016px;top:170.4px;width:96.4px;height:96.4px;border-radius:50%;border:1.400px solid #111;background:conic-gradient(from 0deg,#cfcfcf 0deg,#bdbdbd 25deg,#fbfbfb 70deg,#eeeeee 100deg,#b6b6b6 135deg,#e8e8e8 180deg,#b2b2b2 215deg,#ffffff 265deg,#e0e0e0 300deg,#b0b0b0 330deg,#cfcfcf 360deg);box-shadow:inset 0 0 0 1px rgba(255,255,255,.8);"></div>
<svg style="left:990px;top:210px" width="215" height="105" viewBox="990 210 215 105" fill="none"><path d="M1012 218h-11.500a4 4 0 0 0-4 4v81a4 4 0 0 0 4 4H1140" stroke="#5a2408" stroke-width="2.600"/><path d="M1012 218h-11.500a4 4 0 0 0-4 4v81a4 4 0 0 0 4 4H1140" stroke="#fcc480" stroke-width="1.200"/></svg>
<div style="left:1135.6px;top:167px;width:62.3px;height:51.5px;border-radius:4px;border:1px solid #5a2a08;background:linear-gradient(#f8a21c 0%,#fbb440 35%,#f09018 70%,#e88410 100%);"></div>
<div style="left:1138.5px;top:194.2px;width:57.2px;height:21.5px;border:1.200px solid #1a0303;border-radius:3.500px;background:linear-gradient(#8a3030 0%,#741818 18%,#5a0c0c 55%,#4a0808 80%,#641414 100%);box-shadow:inset 0 1px 0 rgba(255,255,255,.2);"></div>
<svg style="left:1156px;top:169px" width="22" height="23" viewBox="0 0 22 23" fill="none" stroke="#111" stroke-width="2.900" stroke-linecap="round"><path d="M6.200 6.800a7.600 7.600 0 1 0 9.600 0"/><path d="M11 2.500v8.500"/></svg>
<div class="kb" style="left:1138.4px;top:242.7px;width:57px;height:20.6px;"></div>
<div class="kl" style="left:1166.5px;top:227.3px;font-size:11px;letter-spacing:0.619px;">SETTING</div>
<div class="kb" style="left:1001.6px;top:297.4px;width:57px;height:20.6px;"></div>
<div class="kl" style="left:1030px;top:282.8px;font-size:11px;letter-spacing:0.677px;">TEMPO</div>
<div class="kb" style="left:1070.2px;top:297.4px;width:57px;height:20.6px;"></div>
<div class="kl" style="left:1098.5px;top:282.8px;font-size:11px;letter-spacing:0.632px;">OCTAVE</div>
<div class="kb" style="left:1138.5px;top:297.4px;width:57px;height:20.6px;"></div>
<div class="kl" style="left:1166.5px;top:275px;font-size:11px;letter-spacing:0.525px;">TRANS-</div>
<div class="kl" style="left:1166.5px;top:285.2px;font-size:11px;letter-spacing:0.108px;">POSE</div>
<div class="kb" style="left:1001.6px;top:345.4px;width:57px;height:20.6px;"></div>
<div class="kl" style="left:1030px;top:323px;font-size:11px;letter-spacing:1.014px;">CHORD</div>
<div class="kl" style="left:1030px;top:333.4px;font-size:11px;letter-spacing:1.034px;">MEMORY</div>
<div class="kb" style="left:1070.2px;top:345.4px;width:57px;height:20.6px;"></div>
<div class="kl" style="left:1098.5px;top:323px;font-size:11px;letter-spacing:1.014px;">CHORD</div>
<div class="kl" style="left:1098.5px;top:333.4px;font-size:11px;letter-spacing:0.833px;">SCAN</div>
<div class="kb" style="left:1138.5px;top:345.4px;width:57px;height:20.6px;"></div>
<div class="kl" style="left:1166.5px;top:323px;font-size:11px;letter-spacing:0.777px;">TEMPO</div>
<div class="kl" style="left:1166.5px;top:333.4px;font-size:11px;letter-spacing:0.334px;">LOCK</div>
<div class="kl" style="left:283.5px;top:378px;font-size:11px;letter-spacing:0.312px;">STOP</div>
<div class="rb" style="left:271.3px;top:391.3px;width:23.4px;height:23.4px;"></div>
<div style="left:295px;top:401.5px;width:18px;height:3px;background:#fbcc84;border:0.8px solid #5e2a0c;border-radius:1.500px;"></div>
<div style="left:318px;top:379.5px;width:104px;height:3px;background:#fbcc84;border:0.8px solid #5e2a0c;border-radius:1.500px;"></div>
<svg style="left:418px;top:376.5px" width="6" height="9" viewBox="0 0 6 9"><path d="M5.500 .5v8l-5-4z" fill="#f7c163" stroke="#5a2408" stroke-width=".8"/></svg>
<div style="left:473px;top:379.5px;width:111px;height:3px;background:#fbcc84;border:0.8px solid #5e2a0c;border-radius:1.500px;"></div>
<svg style="left:471px;top:376.5px" width="6" height="9" viewBox="0 0 6 9"><path d="M.5 .5v8l5-4z" fill="#f7c163" stroke="#5a2408" stroke-width=".8"/></svg>
<div class="ko" style="left:447.5px;top:372.4px;font-size:15px;line-height:15px;transform:translateX(-50%) scaleX(0.961);">PADS</div>
<div class="kb" style="left:316.7px;top:392.5px;width:57.6px;height:20.3px;"></div>
<div class="kn" style="left:343.9px;top:-5px;font-size:15px;top:395px;"><span class="c1r">1</span></div>
<div style="left:357.0px;top:400px;width:9.4px;height:5px;background:#0000ff;border:1px solid #c4c4c4;"></div>
<div class="kb" style="left:385.0px;top:392.5px;width:57.6px;height:20.3px;"></div>
<div class="kn" style="left:412.22999999999996px;top:-5px;font-size:15px;top:395px;">2</div>
<div style="left:425.3px;top:400px;width:9.4px;height:5px;background:#0000ff;border:1px solid #c4c4c4;"></div>
<div class="kb" style="left:453.4px;top:392.5px;width:57.6px;height:20.3px;"></div>
<div class="kn" style="left:480.56px;top:-5px;font-size:15px;top:395px;">3</div>
<div style="left:493.7px;top:400px;width:9.4px;height:5px;background:#0000ff;border:1px solid #c4c4c4;"></div>
<div class="kb" style="left:521.7px;top:392.5px;width:57.6px;height:20.3px;"></div>
<div class="kn" style="left:548.8900000000001px;top:-5px;font-size:15px;top:395px;">4</div>
<div style="left:562.0px;top:400px;width:9.4px;height:5px;background:#0000ff;border:1px solid #c4c4c4;"></div>
<div class="kl" style="left:639px;top:370.8px;font-size:11px;letter-spacing:0.785px;">SYNCHRO</div>
<div class="kl" style="left:612.4px;top:381.7px;font-size:9px;letter-spacing:0.134px;">START</div>
<div class="kl" style="left:667px;top:381.7px;font-size:9px;letter-spacing:0.414px;">STOP</div>
<div class="rb" style="left:600.1px;top:391.3px;width:23.4px;height:23.4px;"></div>
<div class="rb" style="left:655.2px;top:391.3px;width:23.4px;height:23.4px;"></div>
<div class="tile" style="left:698px;top:370.6px;width:61px;height:44.6px;"></div>
<div class="kd" style="left:728.3px;top:371.1px;font-size:10.5px;letter-spacing:0.756px;">START</div>
<div class="kd" style="left:728.3px;top:381.1px;font-size:10.5px;letter-spacing:0.937px;">/STOP</div>
<div style="left:699.6px;top:392.3px;width:57.8px;height:21.4px;border:1.200px solid #1a0303;border-radius:3.500px;background:linear-gradient(#8a3030 0%,#741818 18%,#5a0c0c 55%,#4a0808 80%,#641414 100%);box-shadow:inset 0 1px 0 rgba(255,255,255,.25);"></div>
<div class="kl" style="left:790px;top:370px;font-size:11px;letter-spacing:-0.235px;">RESET</div>
<div class="kl" style="left:790px;top:381.5px;font-size:9px;letter-spacing:0.259px;">TAP TEMPO</div>
<div class="rb" style="left:778.3px;top:391.3px;width:23.4px;height:23.4px;"></div>
<div class="kl" style="left:845px;top:370px;font-size:11px;letter-spacing:0.165px;">FADE</div>
<div class="kl" style="left:845px;top:381px;font-size:11px;letter-spacing:0.954px;">IN/OUT</div>
<div class="rb" style="left:833.3px;top:391.3px;width:23.4px;height:23.4px;"></div>
<div style="left:879px;top:379.5px;width:67.29999999999995px;height:3px;background:#fbcc84;border:0.8px solid #5e2a0c;border-radius:1.500px;"></div>
<svg style="left:942.3px;top:376.5px" width="6" height="9" viewBox="0 0 6 9"><path d="M5.500 .5v8l-5-4z" fill="#f7c163" stroke="#5a2408" stroke-width=".8"/></svg>
<div style="left:1072.5px;top:379.5px;width:66.5px;height:3px;background:#fbcc84;border:0.8px solid #5e2a0c;border-radius:1.500px;"></div>
<svg style="left:1070.5px;top:376.5px" width="6" height="9" viewBox="0 0 6 9"><path d="M.5 .5v8l5-4z" fill="#f7c163" stroke="#5a2408" stroke-width=".8"/></svg>
<div class="ko" style="left:1009.4px;top:372.4px;font-size:15px;line-height:15px;transform:translateX(-50%) scaleX(0.958);">KEYBOARD SET</div>
<div class="kb" style="left:878.7px;top:392.8px;width:57px;height:20.6px;"></div>
<div class="kn" style="left:907.2px;top:-5px;font-size:15px;top:395.500px;"><span class="c1r">1</span></div>
<div class="kb" style="left:947.0px;top:392.8px;width:57px;height:20.6px;"></div>
<div class="kn" style="left:975.5300000000001px;top:-5px;font-size:15px;top:395.500px;">2</div>
<div class="kb" style="left:1015.4px;top:392.8px;width:57px;height:20.6px;"></div>
<div class="kn" style="left:1043.8600000000001px;top:-5px;font-size:15px;top:395.500px;">3</div>
<div class="kb" style="left:1083.7px;top:392.8px;width:57px;height:20.6px;"></div>
<div class="kn" style="left:1112.19px;top:-5px;font-size:15px;top:395.500px;">4</div>
<div style="left:1141px;top:401.5px;width:22px;height:3px;background:#fbcc84;border:0.8px solid #5e2a0c;border-radius:1.500px;"></div>
<div class="rb" style="left:1162.0px;top:391.3px;width:23.4px;height:23.4px;"></div>
<div class="kl" style="left:1173.5px;top:371px;font-size:11px;letter-spacing:-0.373px;">STYLE TO</div>
<div class="kl" style="left:1173.5px;top:381px;font-size:11px;letter-spacing:0.245px;">KBD SET</div>
<div style="left:338px;top:426.2px;width:66.60000000000002px;height:3px;background:#fbcc84;border:0.8px solid #5e2a0c;border-radius:1.500px;"></div>
<svg style="left:400.6px;top:423.2px" width="6" height="9" viewBox="0 0 6 9"><path d="M5.500 .5v8l-5-4z" fill="#f7c163" stroke="#5a2408" stroke-width=".8"/></svg>
<div style="left:463px;top:426.2px;width:67px;height:3px;background:#fbcc84;border:0.8px solid #5e2a0c;border-radius:1.500px;"></div>
<svg style="left:461px;top:423.2px" width="6" height="9" viewBox="0 0 6 9"><path d="M.5 .5v8l5-4z" fill="#f7c163" stroke="#5a2408" stroke-width=".8"/></svg>
<div class="ko" style="left:433.8px;top:419.09999999999997px;font-size:15px;line-height:15px;transform:translateX(-50%) scaleX(0.994);">INTRO</div>
<div style="left:543.6px;top:426.2px;width:84.0px;height:3px;background:#fbcc84;border:0.8px solid #5e2a0c;border-radius:1.500px;"></div>
<svg style="left:623.6px;top:423.2px" width="6" height="9" viewBox="0 0 6 9"><path d="M5.500 .5v8l-5-4z" fill="#f7c163" stroke="#5a2408" stroke-width=".8"/></svg>
<div style="left:720.9px;top:426.2px;width:83.30000000000007px;height:3px;background:#fbcc84;border:0.8px solid #5e2a0c;border-radius:1.500px;"></div>
<svg style="left:718.9px;top:423.2px" width="6" height="9" viewBox="0 0 6 9"><path d="M.5 .5v8l5-4z" fill="#f7c163" stroke="#5a2408" stroke-width=".8"/></svg>
<div class="ko" style="left:674.25px;top:419.09999999999997px;font-size:15px;line-height:15px;transform:translateX(-50%) scaleX(1.013);">VARIATION</div>
<div class="ko" style="left:885.95px;top:419.09999999999997px;font-size:15px;line-height:15px;transform:translateX(-50%) scaleX(0.924);">BREAK</div>
<div style="left:927px;top:426.2px;width:60.799999999999955px;height:3px;background:#fbcc84;border:0.8px solid #5e2a0c;border-radius:1.500px;"></div>
<svg style="left:983.8px;top:423.2px" width="6" height="9" viewBox="0 0 6 9"><path d="M5.500 .5v8l-5-4z" fill="#f7c163" stroke="#5a2408" stroke-width=".8"/></svg>
<div style="left:1058.2px;top:426.2px;width:60.799999999999955px;height:3px;background:#fbcc84;border:0.8px solid #5e2a0c;border-radius:1.500px;"></div>
<svg style="left:1056.2px;top:423.2px" width="6" height="9" viewBox="0 0 6 9"><path d="M.5 .5v8l5-4z" fill="#f7c163" stroke="#5a2408" stroke-width=".8"/></svg>
<div class="ko" style="left:1023.0px;top:419.09999999999997px;font-size:15px;line-height:15px;transform:translateX(-50%) scaleX(1.001);">ENDING</div>
<div class="kbt" style="left:337.6px;top:439px;width:57px;height:35.5px;"></div>
<div class="kn" style="left:365.40000000000003px;top:-5px;font-size:16px;top:455.500px;"><span class="c1r">1</span></div>
<div class="kbt" style="left:405.9px;top:439px;width:57px;height:35.5px;"></div>
<div class="kn" style="left:433.73px;top:-5px;font-size:16px;top:455.500px;">2</div>
<div class="kbt" style="left:474.3px;top:439px;width:57px;height:35.5px;"></div>
<div class="kn" style="left:502.06px;top:-5px;font-size:16px;top:455.500px;">3</div>
<div class="kbt" style="left:542.6px;top:439px;width:57px;height:35.5px;"></div>
<div class="kn" style="left:570.39px;top:-5px;font-size:16px;top:455.500px;"><span class="c1r">1</span></div>
<div class="kbt" style="left:610.9px;top:439px;width:57px;height:35.5px;"></div>
<div class="kn" style="left:638.72px;top:-5px;font-size:16px;top:455.500px;">2</div>
<div class="kbt" style="left:679.2px;top:439px;width:57px;height:35.5px;"></div>
<div class="kn" style="left:707.05px;top:-5px;font-size:16px;top:455.500px;">3</div>
<div class="kbt" style="left:747.6px;top:439px;width:57px;height:35.5px;"></div>
<div class="kn" style="left:775.38px;top:-5px;font-size:16px;top:455.500px;">4</div>
<div class="kbt" style="left:858.2px;top:439px;width:57px;height:35.5px;"></div>
<div class="kbt" style="left:926.5px;top:439px;width:57px;height:35.5px;"></div>
<div class="kn" style="left:954.33px;top:-5px;font-size:16px;top:455.500px;"><span class="c1r">1</span></div>
<div class="kbt" style="left:994.9px;top:439px;width:57px;height:35.5px;"></div>
<div class="kn" style="left:1022.66px;top:-5px;font-size:16px;top:455.500px;">2</div>
<div class="kbt" style="left:1063.2px;top:439px;width:57px;height:35.5px;"></div>
<div class="kn" style="left:1090.99px;top:-5px;font-size:16px;top:455.500px;">3</div>
<div class="kl" style="left:831.4px;top:424.8px;font-size:11px;letter-spacing:0.684px;">AUTO</div>
<div class="kl" style="left:831.4px;top:435px;font-size:11px;letter-spacing:-0.304px;">FILL</div>
<div class="rb" style="left:819.7px;top:444.5px;width:23.4px;height:23.4px;"></div>
<div style="left:256.4px;top:441.5px;width:68.3px;height:32px;border-radius:5px;border:1px solid #4a2208;background:linear-gradient(90deg,#ffbe4e 0,#f9a21c 9%,#f9a21c 91%,#ffbe4e 100%);"></div>
<div style="left:262px;top:447.3px;width:57.2px;height:20.8px;border:1.300px solid #0c0c0c;border-radius:3.500px;background:linear-gradient(#606060,#454545 30%,#2a2a2a);box-shadow:inset 0 1px 0 rgba(255,255,255,.25);"></div>
<div class="kn" style="left:290.6px;top:-5px;font-size:16px;letter-spacing:-0.909px;top:449.500px;font-weight:bold;-webkit-text-stroke:0;">Sliders</div>
<div style="left:1132.7px;top:441.5px;width:68.3px;height:32px;border-radius:5px;border:1px solid #4a2208;background:linear-gradient(90deg,#ffbe4e 0,#f9a21c 9%,#f9a21c 91%,#ffbe4e 100%);"></div>
<div style="left:1138.2px;top:447.3px;width:57.2px;height:20.8px;border:1.300px solid #0c0c0c;border-radius:3.500px;background:linear-gradient(#606060,#454545 30%,#2a2a2a);box-shadow:inset 0 1px 0 rgba(255,255,255,.25);"></div>
<div class="kn" style="left:1166.8px;top:-5px;font-size:16px;letter-spacing:-0.836px;top:449.500px;font-weight:bold;-webkit-text-stroke:0;">Effects</div>
<div style="left:256.4px;top:476px;width:944.6px;height:1px;background:#f4f000;"></div>
<div style="left:256.4px;top:477px;width:944.6px;height:2px;background:#ff0000;"></div>
<div class="kb" style="left:262.4px;top:502.4px;width:57px;height:20.6px;"></div>
<div class="kl" style="left:290.7px;top:480px;font-size:11px;letter-spacing:0.855px;">SOUND</div>
<div class="kl" style="left:290.7px;top:490px;font-size:11px;letter-spacing:0.875px;">/LOOP</div>
<div class="kb" style="left:330.6px;top:502.4px;width:57px;height:20.6px;"></div>
<div class="kl" style="left:359px;top:480px;font-size:11px;letter-spacing:0.506px;">KEYBOARD</div>
<div class="kl" style="left:359px;top:490px;font-size:11px;letter-spacing:-0.331px;">SET</div>
<div class="kl" style="left:420.3px;top:487px;font-size:11px;letter-spacing:0.142px;">LIST</div>
<div class="rb" style="left:408.8px;top:501.0px;width:23.4px;height:23.4px;"></div>
<svg style="left:440.600px;top:501.700px" width="16" height="21.400" viewBox="0 0 16 21.400"><path d="M5.200 .7l10 10-10 10-4.400-4.400 5.600-5.600-5.600-5.600z" fill="#fbc06a" stroke="#5a2408" stroke-width=".9"/></svg>
<div style="left:462.3px;top:480px;width:64px;height:46px;background:repeating-linear-gradient(45deg,rgba(0,0,0,.035) 0,rgba(0,0,0,.035) 1.2px,rgba(0,0,0,0) 1.2px,rgba(0,0,0,0) 3.38px),#cbcbcb;border-radius:6px 6px 0 0;box-shadow:0 0 0 1px rgba(60,60,60,.55);"></div>
<div style="left:529.4px;top:480px;width:64px;height:46px;background:repeating-linear-gradient(45deg,rgba(0,0,0,.035) 0,rgba(0,0,0,.035) 1.2px,rgba(0,0,0,0) 1.2px,rgba(0,0,0,0) 3.38px),#cbcbcb;border-radius:6px 6px 0 0;box-shadow:0 0 0 1px rgba(60,60,60,.55);"></div>
<div style="left:596.4px;top:480px;width:64px;height:46px;background:repeating-linear-gradient(45deg,rgba(0,0,0,.035) 0,rgba(0,0,0,.035) 1.2px,rgba(0,0,0,0) 1.2px,rgba(0,0,0,0) 3.38px),#cbcbcb;border-radius:6px 6px 0 0;box-shadow:0 0 0 1px rgba(60,60,60,.55);"></div>
<div style="left:663.5px;top:480px;width:64px;height:46px;background:repeating-linear-gradient(45deg,rgba(0,0,0,.035) 0,rgba(0,0,0,.035) 1.2px,rgba(0,0,0,0) 1.2px,rgba(0,0,0,0) 3.38px),#cbcbcb;border-radius:6px 6px 0 0;box-shadow:0 0 0 1px rgba(60,60,60,.55);"></div>
<div style="left:730.5px;top:480px;width:64px;height:46px;background:repeating-linear-gradient(45deg,rgba(0,0,0,.035) 0,rgba(0,0,0,.035) 1.2px,rgba(0,0,0,0) 1.2px,rgba(0,0,0,0) 3.38px),#cbcbcb;border-radius:6px 6px 0 0;box-shadow:0 0 0 1px rgba(60,60,60,.55);"></div>
<div style="left:797.5px;top:480px;width:64px;height:46px;background:repeating-linear-gradient(45deg,rgba(0,0,0,.035) 0,rgba(0,0,0,.035) 1.2px,rgba(0,0,0,0) 1.2px,rgba(0,0,0,0) 3.38px),#cbcbcb;border-radius:6px 6px 0 0;box-shadow:0 0 0 1px rgba(60,60,60,.55);"></div>
<div style="left:864.6px;top:480px;width:64px;height:46px;background:repeating-linear-gradient(45deg,rgba(0,0,0,.035) 0,rgba(0,0,0,.035) 1.2px,rgba(0,0,0,0) 1.2px,rgba(0,0,0,0) 3.38px),#cbcbcb;border-radius:6px 6px 0 0;box-shadow:0 0 0 1px rgba(60,60,60,.55);"></div>
<div style="left:931.6px;top:480px;width:64px;height:46px;background:repeating-linear-gradient(45deg,rgba(0,0,0,.035) 0,rgba(0,0,0,.035) 1.2px,rgba(0,0,0,0) 1.2px,rgba(0,0,0,0) 3.38px),#cbcbcb;border-radius:6px 6px 0 0;box-shadow:0 0 0 1px rgba(60,60,60,.55);"></div>
<svg style="left:1001.400px;top:501.700px" width="16" height="21.400" viewBox="0 0 16 21.400"><path d="M10.800 .7l-10 10 10 10 4.400-4.400-5.600-5.600 5.600-5.600z" fill="#fbc06a" stroke="#5a2408" stroke-width=".9"/></svg>
<div class="kl" style="left:1036.6px;top:487px;font-size:11px;letter-spacing:0.062px;">STOP</div>
<div class="rb" style="left:1025.3px;top:500.7px;width:23.4px;height:23.4px;"></div>
<div class="kb" style="left:1070.6px;top:502.4px;width:57px;height:20.6px;"></div>
<div class="kl" style="left:1099px;top:480px;font-size:11px;letter-spacing:0.110px;">STYLE</div>
<div class="kl" style="left:1099px;top:490.4px;font-size:11px;letter-spacing:0.101px;">SELECT</div>
<div class="kb" style="left:1139px;top:502.4px;width:57px;height:20.6px;"></div>
<div class="kl" style="left:1167.5px;top:480px;font-size:11px;letter-spacing:0.935px;">CHORD/</div>
<div class="kl" style="left:1167.5px;top:490.4px;font-size:11px;letter-spacing:0.812px;">MINI KBD</div>
<div style="left:256.4px;top:525.6px;width:944.6px;height:6px;background:#c0c0c0;"></div>
<div style="left:311px;top:369px;width:275px;height:49px;border:2px solid #f00;"></div>
<div style="left:313px;top:371px;width:65px;height:45px;border:3px solid #ffff00;"></div>
<div style="left:381px;top:371px;width:65px;height:45px;border:3px solid #ffff00;"></div>
<div style="left:450px;top:371px;width:65px;height:45px;border:3px solid #ffff00;"></div>
<div style="left:518px;top:371px;width:65px;height:45px;border:3px solid #ffff00;"></div>
<div style="left:256px;top:164px;width:945px;height:362px;background:linear-gradient(90deg,#fff 0px,#fff 1px,transparent 1px,transparent 7px,#fff 7px,#fff 8px,transparent 8px,transparent 14px,#fff 14px,#fff 15px,transparent 15px,transparent 21px,#fff 21px,#fff 22px,transparent 22px,transparent 27px,#fff 27px,#fff 28px,transparent 28px,transparent 34px,#fff 34px,#fff 35px,transparent 35px,transparent 41px,#fff 41px,#fff 42px,transparent 42px,transparent 48px,#fff 48px,#fff 49px,transparent 49px,transparent 55px,#fff 55px,#fff 56px,transparent 56px,transparent 62px,#fff 62px,#fff 63px,transparent 63px,transparent 68px,#fff 68px,#fff 69px,transparent 69px,transparent 75px,#fff 75px,#fff 76px,transparent 76px,transparent 82px,#fff 82px,#fff 83px,transparent 83px,transparent 89px,#fff 89px,#fff 90px,transparent 90px,transparent 96px,#fff 96px,#fff 97px,transparent 97px,transparent 103px,#fff 103px,#fff 104px,transparent 104px,transparent 110px,#fff 110px,#fff 111px,transparent 111px,transparent 116px,#fff 116px,#fff 117px,transparent 117px,transparent 123px,#fff 123px,#fff 124px,transparent 124px,transparent 130px,#fff 130px,#fff 131px,transparent 131px,transparent 137px,#fff 137px,#fff 138px,transparent 138px,transparent 144px,#fff 144px,#fff 145px,transparent 145px,transparent 151px,#fff 151px,#fff 152px,transparent 152px,transparent 157px,#fff 157px,#fff 158px,transparent 158px,transparent 164px,#fff 164px,#fff 165px,transparent 165px,transparent 171px,#fff 171px,#fff 172px,transparent 172px,transparent 178px,#fff 178px,#fff 179px,transparent 179px,transparent 185px,#fff 185px,#fff 186px,transparent 186px,transparent 192px,#fff 192px,#fff 193px,transparent 193px,transparent 199px,#fff 199px,#fff 200px,transparent 200px,transparent 205px,#fff 205px,#fff 206px,transparent 206px,transparent 212px,#fff 212px,#fff 213px,transparent 213px,transparent 219px,#fff 219px,#fff 220px,transparent 220px,transparent 226px,#fff 226px,#fff 227px,transparent 227px,transparent 233px,#fff 233px,#fff 234px,transparent 234px,transparent 240px,#fff 240px,#fff 241px,transparent 241px,transparent 246px,#fff 246px,#fff 247px,transparent 247px,transparent 253px,#fff 253px,#fff 254px,transparent 254px,transparent 260px,#fff 260px,#fff 261px,transparent 261px,transparent 267px,#fff 267px,#fff 268px,transparent 268px,transparent 274px,#fff 274px,#fff 275px,transparent 275px,transparent 281px,#fff 281px,#fff 282px,transparent 282px,transparent 288px,#fff 288px,#fff 289px,transparent 289px,transparent 294px,#fff 294px,#fff 295px,transparent 295px,transparent 301px,#fff 301px,#fff 302px,transparent 302px,transparent 308px,#fff 308px,#fff 309px,transparent 309px,transparent 315px,#fff 315px,#fff 316px,transparent 316px,transparent 322px,#fff 322px,#fff 323px,transparent 323px,transparent 329px,#fff 329px,#fff 330px,transparent 330px,transparent 336px,#fff 336px,#fff 337px,transparent 337px,transparent 342px,#fff 342px,#fff 343px,transparent 343px,transparent 349px,#fff 349px,#fff 350px,transparent 350px,transparent 356px,#fff 356px,#fff 357px,transparent 357px,transparent 363px,#fff 363px,#fff 364px,transparent 364px,transparent 370px,#fff 370px,#fff 371px,transparent 371px,transparent 377px,#fff 377px,#fff 378px,transparent 378px,transparent 383px,#fff 383px,#fff 384px,transparent 384px,transparent 390px,#fff 390px,#fff 391px,transparent 391px,transparent 397px,#fff 397px,#fff 398px,transparent 398px,transparent 404px,#fff 404px,#fff 405px,transparent 405px,transparent 411px,#fff 411px,#fff 412px,transparent 412px,transparent 418px,#fff 418px,#fff 419px,transparent 419px,transparent 425px,#fff 425px,#fff 426px,transparent 426px,transparent 431px,#fff 431px,#fff 432px,transparent 432px,transparent 438px,#fff 438px,#fff 439px,transparent 439px,transparent 445px,#fff 445px,#fff 446px,transparent 446px,transparent 452px,#fff 452px,#fff 453px,transparent 453px,transparent 459px,#fff 459px,#fff 460px,transparent 460px,transparent 466px,#fff 466px,#fff 467px,transparent 467px,transparent 472px,#fff 472px,#fff 473px,transparent 473px,transparent 479px,#fff 479px,#fff 480px,transparent 480px,transparent 486px,#fff 486px,#fff 487px,transparent 487px,transparent 493px,#fff 493px,#fff 494px,transparent 494px,transparent 500px,#fff 500px,#fff 501px,transparent 501px,transparent 507px,#fff 507px,#fff 508px,transparent 508px,transparent 514px,#fff 514px,#fff 515px,transparent 515px,transparent 520px,#fff 520px,#fff 521px,transparent 521px,transparent 527px,#fff 527px,#fff 528px,transparent 528px,transparent 534px,#fff 534px,#fff 535px,transparent 535px,transparent 541px,#fff 541px,#fff 542px,transparent 542px,transparent 548px,#fff 548px,#fff 549px,transparent 549px,transparent 555px,#fff 555px,#fff 556px,transparent 556px,transparent 561px,#fff 561px,#fff 562px,transparent 562px,transparent 568px,#fff 568px,#fff 569px,transparent 569px,transparent 575px,#fff 575px,#fff 576px,transparent 576px,transparent 582px,#fff 582px,#fff 583px,transparent 583px,transparent 589px,#fff 589px,#fff 590px,transparent 590px,transparent 596px,#fff 596px,#fff 597px,transparent 597px,transparent 603px,#fff 603px,#fff 604px,transparent 604px,transparent 609px,#fff 609px,#fff 610px,transparent 610px,transparent 616px,#fff 616px,#fff 617px,transparent 617px,transparent 623px,#fff 623px,#fff 624px,transparent 624px,transparent 630px,#fff 630px,#fff 631px,transparent 631px,transparent 637px,#fff 637px,#fff 638px,transparent 638px,transparent 644px,#fff 644px,#fff 645px,transparent 645px,transparent 650px,#fff 650px,#fff 651px,transparent 651px,transparent 657px,#fff 657px,#fff 658px,transparent 658px,transparent 664px,#fff 664px,#fff 665px,transparent 665px,transparent 671px,#fff 671px,#fff 672px,transparent 672px,transparent 678px,#fff 678px,#fff 679px,transparent 679px,transparent 685px,#fff 685px,#fff 686px,transparent 686px,transparent 692px,#fff 692px,#fff 693px,transparent 693px,transparent 698px,#fff 698px,#fff 699px,transparent 699px,transparent 705px,#fff 705px,#fff 706px,transparent 706px,transparent 712px,#fff 712px,#fff 713px,transparent 713px,transparent 719px,#fff 719px,#fff 720px,transparent 720px,transparent 726px,#fff 726px,#fff 727px,transparent 727px,transparent 733px,#fff 733px,#fff 734px,transparent 734px,transparent 739px,#fff 739px,#fff 740px,transparent 740px,transparent 746px,#fff 746px,#fff 747px,transparent 747px,transparent 753px,#fff 753px,#fff 754px,transparent 754px,transparent 760px,#fff 760px,#fff 761px,transparent 761px,transparent 767px,#fff 767px,#fff 768px,transparent 768px,transparent 774px,#fff 774px,#fff 775px,transparent 775px,transparent 781px,#fff 781px,#fff 782px,transparent 782px,transparent 787px,#fff 787px,#fff 788px,transparent 788px,transparent 794px,#fff 794px,#fff 795px,transparent 795px,transparent 801px,#fff 801px,#fff 802px,transparent 802px,transparent 808px,#fff 808px,#fff 809px,transparent 809px,transparent 815px,#fff 815px,#fff 816px,transparent 816px,transparent 822px,#fff 822px,#fff 823px,transparent 823px,transparent 828px,#fff 828px,#fff 829px,transparent 829px,transparent 835px,#fff 835px,#fff 836px,transparent 836px,transparent 842px,#fff 842px,#fff 843px,transparent 843px,transparent 849px,#fff 849px,#fff 850px,transparent 850px,transparent 856px,#fff 856px,#fff 857px,transparent 857px,transparent 863px,#fff 863px,#fff 864px,transparent 864px,transparent 870px,#fff 870px,#fff 871px,transparent 871px,transparent 876px,#fff 876px,#fff 877px,transparent 877px,transparent 883px,#fff 883px,#fff 884px,transparent 884px,transparent 890px,#fff 890px,#fff 891px,transparent 891px,transparent 897px,#fff 897px,#fff 898px,transparent 898px,transparent 904px,#fff 904px,#fff 905px,transparent 905px,transparent 911px,#fff 911px,#fff 912px,transparent 912px,transparent 917px,#fff 917px,#fff 918px,transparent 918px,transparent 924px,#fff 924px,#fff 925px,transparent 925px,transparent 931px,#fff 931px,#fff 932px,transparent 932px,transparent 938px,#fff 938px,#fff 939px,transparent 939px,transparent 946px);-webkit-mask-image:linear-gradient(180deg,#000 0px,#000 1px,transparent 1px,transparent 7px,#000 7px,#000 8px,transparent 8px,transparent 14px,#000 14px,#000 15px,transparent 15px,transparent 20px,#000 20px,#000 21px,transparent 21px,transparent 27px,#000 27px,#000 28px,transparent 28px,transparent 34px,#000 34px,#000 35px,transparent 35px,transparent 41px,#000 41px,#000 42px,transparent 42px,transparent 48px,#000 48px,#000 49px,transparent 49px,transparent 55px,#000 55px,#000 56px,transparent 56px,transparent 61px,#000 61px,#000 62px,transparent 62px,transparent 68px,#000 68px,#000 69px,transparent 69px,transparent 75px,#000 75px,#000 76px,transparent 76px,transparent 82px,#000 82px,#000 83px,transparent 83px,transparent 89px,#000 89px,#000 90px,transparent 90px,transparent 96px,#000 96px,#000 97px,transparent 97px,transparent 102px,#000 102px,#000 103px,transparent 103px,transparent 109px,#000 109px,#000 110px,transparent 110px,transparent 116px,#000 116px,#000 117px,transparent 117px,transparent 123px,#000 123px,#000 124px,transparent 124px,transparent 130px,#000 130px,#000 131px,transparent 131px,transparent 137px,#000 137px,#000 138px,transparent 138px,transparent 143px,#000 143px,#000 144px,transparent 144px,transparent 150px,#000 150px,#000 151px,transparent 151px,transparent 157px,#000 157px,#000 158px,transparent 158px,transparent 164px,#000 164px,#000 165px,transparent 165px,transparent 171px,#000 171px,#000 172px,transparent 172px,transparent 178px,#000 178px,#000 179px,transparent 179px,transparent 184px,#000 184px,#000 185px,transparent 185px,transparent 191px,#000 191px,#000 192px,transparent 192px,transparent 198px,#000 198px,#000 199px,transparent 199px,transparent 205px,#000 205px,#000 206px,transparent 206px,transparent 212px,#000 212px,#000 213px,transparent 213px,transparent 219px,#000 219px,#000 220px,transparent 220px,transparent 225px,#000 225px,#000 226px,transparent 226px,transparent 232px,#000 232px,#000 233px,transparent 233px,transparent 239px,#000 239px,#000 240px,transparent 240px,transparent 246px,#000 246px,#000 247px,transparent 247px,transparent 253px,#000 253px,#000 254px,transparent 254px,transparent 260px,#000 260px,#000 261px,transparent 261px,transparent 266px,#000 266px,#000 267px,transparent 267px,transparent 273px,#000 273px,#000 274px,transparent 274px,transparent 280px,#000 280px,#000 281px,transparent 281px,transparent 287px,#000 287px,#000 288px,transparent 288px,transparent 294px,#000 294px,#000 295px,transparent 295px,transparent 301px,#000 301px,#000 302px,transparent 302px,transparent 307px,#000 307px,#000 308px,transparent 308px,transparent 314px,#000 314px,#000 315px,transparent 315px,transparent 321px,#000 321px,#000 322px,transparent 322px,transparent 328px,#000 328px,#000 329px,transparent 329px,transparent 335px,#000 335px,#000 336px,transparent 336px,transparent 342px,#000 342px,#000 343px,transparent 343px,transparent 348px,#000 348px,#000 349px,transparent 349px,transparent 355px,#000 355px,#000 356px,transparent 356px,transparent 363px);mask-image:linear-gradient(180deg,#000 0px,#000 1px,transparent 1px,transparent 7px,#000 7px,#000 8px,transparent 8px,transparent 14px,#000 14px,#000 15px,transparent 15px,transparent 20px,#000 20px,#000 21px,transparent 21px,transparent 27px,#000 27px,#000 28px,transparent 28px,transparent 34px,#000 34px,#000 35px,transparent 35px,transparent 41px,#000 41px,#000 42px,transparent 42px,transparent 48px,#000 48px,#000 49px,transparent 49px,transparent 55px,#000 55px,#000 56px,transparent 56px,transparent 61px,#000 61px,#000 62px,transparent 62px,transparent 68px,#000 68px,#000 69px,transparent 69px,transparent 75px,#000 75px,#000 76px,transparent 76px,transparent 82px,#000 82px,#000 83px,transparent 83px,transparent 89px,#000 89px,#000 90px,transparent 90px,transparent 96px,#000 96px,#000 97px,transparent 97px,transparent 102px,#000 102px,#000 103px,transparent 103px,transparent 109px,#000 109px,#000 110px,transparent 110px,transparent 116px,#000 116px,#000 117px,transparent 117px,transparent 123px,#000 123px,#000 124px,transparent 124px,transparent 130px,#000 130px,#000 131px,transparent 131px,transparent 137px,#000 137px,#000 138px,transparent 138px,transparent 143px,#000 143px,#000 144px,transparent 144px,transparent 150px,#000 150px,#000 151px,transparent 151px,transparent 157px,#000 157px,#000 158px,transparent 158px,transparent 164px,#000 164px,#000 165px,transparent 165px,transparent 171px,#000 171px,#000 172px,transparent 172px,transparent 178px,#000 178px,#000 179px,transparent 179px,transparent 184px,#000 184px,#000 185px,transparent 185px,transparent 191px,#000 191px,#000 192px,transparent 192px,transparent 198px,#000 198px,#000 199px,transparent 199px,transparent 205px,#000 205px,#000 206px,transparent 206px,transparent 212px,#000 212px,#000 213px,transparent 213px,transparent 219px,#000 219px,#000 220px,transparent 220px,transparent 225px,#000 225px,#000 226px,transparent 226px,transparent 232px,#000 232px,#000 233px,transparent 233px,transparent 239px,#000 239px,#000 240px,transparent 240px,transparent 246px,#000 246px,#000 247px,transparent 247px,transparent 253px,#000 253px,#000 254px,transparent 254px,transparent 260px,#000 260px,#000 261px,transparent 261px,transparent 266px,#000 266px,#000 267px,transparent 267px,transparent 273px,#000 273px,#000 274px,transparent 274px,transparent 280px,#000 280px,#000 281px,transparent 281px,transparent 287px,#000 287px,#000 288px,transparent 288px,transparent 294px,#000 294px,#000 295px,transparent 295px,transparent 301px,#000 301px,#000 302px,transparent 302px,transparent 307px,#000 307px,#000 308px,transparent 308px,transparent 314px,#000 314px,#000 315px,transparent 315px,transparent 321px,#000 321px,#000 322px,transparent 322px,transparent 328px,#000 328px,#000 329px,transparent 329px,transparent 335px,#000 335px,#000 336px,transparent 336px,transparent 342px,#000 342px,#000 343px,transparent 343px,transparent 348px,#000 348px,#000 349px,transparent 349px,transparent 355px,#000 355px,#000 356px,transparent 356px,transparent 363px);opacity:.92;"></div>
<div class="ro" style="left:2.5px;top:32.5px;width:106.0px;height:21.5px;border-radius:10.75px;"></div>
<div class="ro" style="left:111px;top:32.5px;width:41.5px;height:20.5px;border-radius:10.25px;"></div>
<div class="ro" style="left:250.5px;top:31.5px;width:243.0px;height:21.0px;border-radius:10.5px;"></div>
<div class="ro" style="left:250.5px;top:59px;width:243.0px;height:21px;border-radius:10.5px;"></div>
<div class="ro" style="left:502.5px;top:31.5px;width:245.0px;height:21.5px;border-radius:10.75px;"></div>
<div class="ro" style="left:502.5px;top:58.5px;width:245.0px;height:22.0px;border-radius:11.0px;"></div>
<div class="ro" style="left:797px;top:31.5px;width:340.5px;height:22.0px;border-radius:11.0px;"></div>
<div class="ro" style="left:797px;top:58.5px;width:340.5px;height:22.0px;border-radius:11.0px;"></div>
<div class="ro" style="left:1137.5px;top:31.5px;width:64.5px;height:49.5px;border-radius:9px;"></div>
<div class="ro" style="left:2px;top:57.2px;width:246px;height:369.1px;border-radius:8px;"></div>
<div class="ro" style="left:2px;top:430.3px;width:246.3px;height:198.7px;border-radius:9px;"></div>
<div class="ro" style="left:253px;top:607.5px;width:367px;height:21.0px;border-radius:10.5px;"></div>
<div class="ro" style="left:834px;top:607.5px;width:123px;height:21.0px;border-radius:10.5px;"></div>
<div class="ro" style="left:961.5px;top:607.5px;width:122.5px;height:21.0px;border-radius:10.5px;"></div>
<div class="ro" style="left:1093px;top:607.5px;width:76px;height:22.5px;border-radius:11.25px;"></div>
<div class="ro" style="left:1171.5px;top:607.5px;width:31.5px;height:22.5px;border-radius:11.25px;"></div>
<div class="num" style="left:53.7px;top:1.3px;font-size:28px;line-height:28px;"><span class="c1">1</span></div>
<div class="num" style="left:131.5px;top:1.3px;font-size:28px;line-height:28px;">2</div>
<div class="num" style="left:371.2px;top:1.3px;font-size:28px;line-height:28px;">3</div>
<div class="num" style="left:621px;top:1.3px;font-size:28px;line-height:28px;">4</div>
<div class="num" style="left:961.5px;top:1.3px;font-size:28px;line-height:28px;">8</div>
<div class="num" style="left:372px;top:81.3px;font-size:28px;line-height:28px;">6</div>
<div class="num" style="left:621.5px;top:81.3px;font-size:28px;line-height:28px;">7</div>
<div class="num" style="left:962px;top:81.3px;font-size:28px;line-height:28px;">9</div>
<div class="num" style="left:1171.4px;top:81.5px;font-size:28px;line-height:28px;"><span class="c1">1</span>0</div>
<div class="num" style="left:42.7px;top:77.7px;font-size:42.5px;line-height:42.5px;transform:translateX(-50%) scaleX(.97);">5</div>
<div class="num" style="left:313px;top:206.6px;font-size:43.5px;line-height:43.5px;transform:translateX(-50%) scaleX(.97);letter-spacing:2px;"><span class="c1">1</span><span class="c1">1</span></div>
<div class="num" style="left:53.4px;top:458.2px;font-size:43.5px;line-height:43.5px;transform:translateX(-50%) scaleX(.97);letter-spacing:2.500px;"><span class="c1">1</span>7</div>
<div class="num" style="left:431.5px;top:579.8px;font-size:28px;line-height:28px;"><span class="c1">1</span>6</div>
<div class="num" style="left:893px;top:579.8px;font-size:28px;line-height:28px;"><span class="c1">1</span>5</div>
<div class="num" style="left:1023.4px;top:579.8px;font-size:28px;line-height:28px;"><span class="c1">1</span>2</div>
<div class="num" style="left:1130.5px;top:579.8px;font-size:28px;line-height:28px;"><span class="c1">1</span>3</div>
<div class="num" style="left:1183px;top:579.8px;font-size:28px;line-height:28px;"><span class="c1">1</span>4</div>
</body></html>
